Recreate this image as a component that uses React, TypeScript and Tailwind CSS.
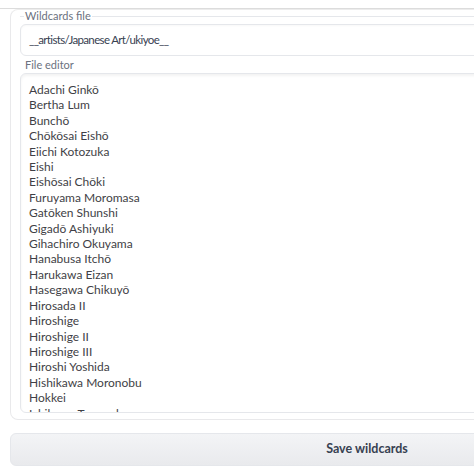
const artists = [
  'Adachi Ginkō',
  'Bertha Lum',
  'Bunchō',
  'Chōkōsai Eishō',
  'Eiichi Kotozuka',
  'Eishi',
  'Eishōsai Chōki',
  'Furuyama Moromasa',
  'Gatōken Shunshi',
  'Gigadō Ashiyuki',
  'Gihachiro Okuyama',
  'Hanabusa Itchō',
  'Harukawa Eizan',
  'Hasegawa Chikuyō',
  'Hirosada II',
  'Hiroshige',
  'Hiroshige II',
  'Hiroshige III',
  'Hiroshi Yoshida',
  'Hishikawa Moronobu',
  'Hokkei',
  'Ichikawa Toyonobu',
  'Ippitsusai Bunchō',
];

function FieldLabel({ text }: { text: string }) {
  return (
    <div className="flex items-center h-[10px]">
      <span className="w-[4px] border-t border-[#e5e7eb]"></span>
      <span className="px-[1px] text-[11px] leading-[10px] text-[#6b7280]">{text}</span>
      <span className="flex-1 border-t border-[#e5e7eb]"></span>
    </div>
  );
}

export default function App() {
  return (
    <div
      className="w-[474px] h-[468px] overflow-hidden bg-white"
      style={{ fontFamily: 'Lato, "Noto Sans", sans-serif' }}
    >
      <div className="w-[734px]">
        <div className="h-[8px]"></div>
        <div className="border-t border-[#dcdcdc]"></div>

        <div className="ml-[10px] w-[714px] h-[411px] border border-t-[#ececec] border-[#e9e9eb] rounded-lg px-[9px] pt-[1px]">
          <FieldLabel text="Wildcards file" />
          <div className="mt-[3px] h-[32px] border border-[#e5e7eb] rounded-md shadow-[inset_0_1px_2px_rgba(0,0,0,0.03)] flex items-center pl-[8px] text-[11.5px] tracking-[-0.65px] text-[#374151]">
            __artists/Japanese Art/ukiyoe__
          </div>

          <div className="mt-[4px] h-[10px] pl-[5px] text-[11px] leading-[10px] text-[#6b7280]">File editor</div>

          <div className="mt-[3px] h-[340px] border border-[#e5e7eb] rounded-md shadow-[inset_0_2px_3px_rgba(0,0,0,0.05)] overflow-hidden pt-[8px] pl-[8px] text-[12px] leading-[15.4px] text-[#3f3f46]">
            {artists.map(name => (
              <div key={name}>{name}</div>
            ))}
          </div>
        </div>

        <button className="mt-[13px] ml-[10px] w-[714px] h-[33px] rounded-md border border-[#e5e7eb] bg-gradient-to-b from-[#f3f4f6] to-[#e9eaed] text-[12.5px] font-bold text-[#374151]">
          Save wildcards
        </button>
      </div>
    </div>
  );
}
